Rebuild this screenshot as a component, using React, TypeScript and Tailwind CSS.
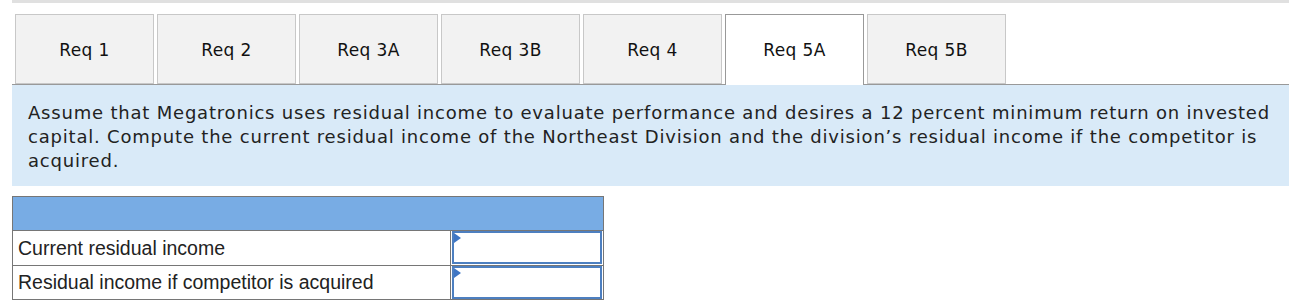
import React from "react";

const tabs = ["Req 1", "Req 2", "Req 3A", "Req 3B", "Req 4", "Req 5A", "Req 5B"];

function InputCell() {
  return (
    <td className="border border-[#767676] p-0 w-[153px] h-[34px] align-top">
      <div className="relative h-[33px] mx-[1px] border-2 border-[#4d7fc0] bg-white">
        <div className="absolute left-0 top-0 w-0 h-0 border-t-[5px] border-b-[5px] border-l-[7px] border-t-transparent border-b-transparent border-l-[#3f76c4]" />
      </div>
    </td>
  );
}

export default function App() {
  return (
    <div className="w-[1293px] h-[301px] bg-white px-[12px] overflow-hidden">
      <div className="h-[3px] w-[1277px] bg-[#e0e0e0]" />
      <div className="mt-[11px] flex gap-[3px] pl-[3px] border-b border-[#999] w-[1277px] h-[71px]">
        {tabs.map((t) => {
          const active = t === "Req 5A";
          return (
            <div
              key={t}
              className={
                active
                  ? "w-[139px] h-[71px] pt-[4px] pb-[2px] border border-b-0 border-[#999] bg-white flex items-center justify-center text-[17px] tracking-[0.4px] text-[#111]"
                  : "w-[139px] h-[70px] pt-[4px] border border-[#c8c8c8] bg-[#f2f2f2] flex items-center justify-center text-[17px] tracking-[0.4px] text-[#111]"
              }
              style={{ fontFamily: '"DejaVu Sans", Verdana, sans-serif' }}
            >
              {t}
            </div>
          );
        })}
      </div>
      <div
        className="w-[1277px] bg-[#d9eaf8] pl-[16px] pr-[4px] pt-[16px] pb-[13px] text-[18px] tracking-[0.8px] leading-[24px] text-[#222]"
        style={{ fontFamily: '"DejaVu Sans", Verdana, sans-serif' }}
      >
        Assume that Megatronics uses residual income to evaluate performance and desires a 12 percent minimum return on invested capital. Compute the current residual income of the Northeast Division and the division’s residual income if the competitor is acquired.
      </div>
      <table
        className="mt-[10px] border-collapse w-[592px] text-[19.5px] text-[#222]"
        style={{ fontFamily: '"Liberation Sans", Arial, sans-serif' }}
      >
        <tbody>
          <tr>
            <td colSpan={2} className="h-[34px] bg-[#78ace4] border border-[#767676]" />
          </tr>
          <tr>
            <td className="border border-[#767676] h-[35px] pl-[5px] pb-[1px] leading-[22px]">Current residual income</td>
            <InputCell />
          </tr>
          <tr>
            <td className="border border-[#767676] h-[34px] pl-[5px] pb-[1px] leading-[22px]">Residual income if competitor is acquired</td>
            <InputCell />
          </tr>
        </tbody>
      </table>
    </div>
  );
}
